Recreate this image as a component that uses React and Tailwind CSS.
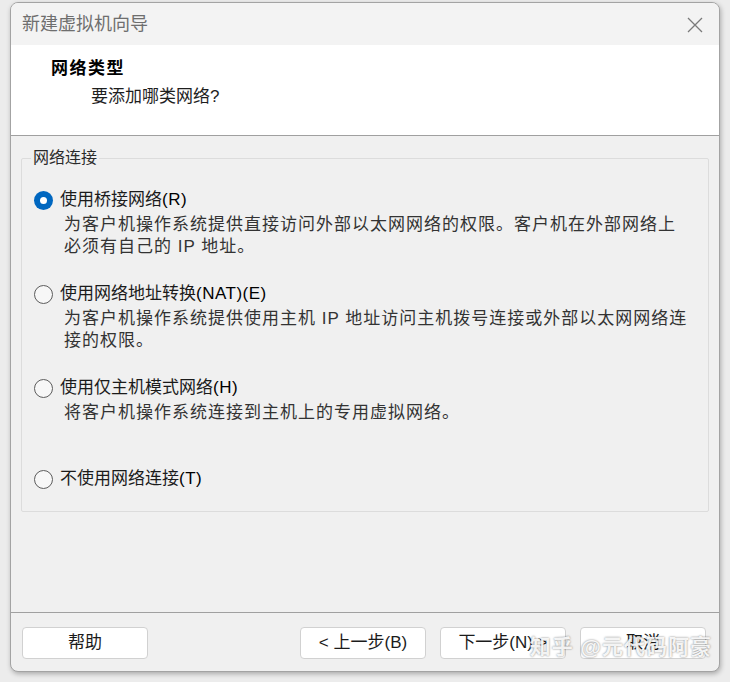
import React, { useState } from 'react';

const font = "font-['Liberation_Sans','Noto_Sans_CJK_SC',sans-serif]";

const options = [
  {
    id: 'bridged',
    label: '使用桥接网络',
    key: '(R)',
    desc: ['为客户机操作系统提供直接访问外部以太网网络的权限。客户机在外部网络上', '必须有自己的 IP 地址。'],
  },
  {
    id: 'nat',
    label: '使用网络地址转换',
    key: '(NAT)(E)',
    desc: ['为客户机操作系统提供使用主机 IP 地址访问主机拨号连接或外部以太网网络连', '接的权限。'],
  },
  {
    id: 'host',
    label: '使用仅主机模式网络',
    key: '(H)',
    desc: ['将客户机操作系统连接到主机上的专用虚拟网络。'],
  },
  {
    id: 'none',
    label: '不使用网络连接',
    key: '(T)',
    desc: [],
  },
];

const Radio = ({ checked }) =>
  checked ? (
    <span className="flex h-[19px] w-[19px] shrink-0 items-center justify-center rounded-full bg-[#0067c0]">
      <span className="h-[7px] w-[7px] rounded-full bg-white" />
    </span>
  ) : (
    <span className="h-[19px] w-[19px] shrink-0 rounded-full border border-[#5c5c5c] bg-[#f7f7f7]" />
  );

const Button = ({ children, className = '' }) => (
  <button
    className={`h-[32px] w-[126px] rounded-[4px] border border-[#d1d1d1] bg-white text-[17px] text-[#1b1b1b] ${className}`}
  >
    {children}
  </button>
);

const App = () => {
  const [selected, setSelected] = useState('bridged');

  return (
    <div className={`h-[682px] w-[730px] overflow-hidden bg-[#ececec] pl-[10px] pt-[2px] ${font}`}>
      <div className="relative flex h-[670px] w-[710px] flex-col overflow-hidden rounded-[8px] border border-[#a3a3a3] bg-[#f0f0f0] shadow-[1px_2px_5px_rgba(0,0,0,0.28)]">
        {/* Title bar */}
        <div className="flex h-[42px] shrink-0 items-center justify-between bg-[#f3f3f3] pl-[11px] pr-[16px]">
          <span className="text-[18px] text-[#6e6e6e]">新建虚拟机向导</span>
          <svg width="16" height="16" viewBox="0 0 16 16" className="mt-[1px]">
            <path d="M1 1 L15 15 M15 1 L1 15" stroke="#7a7a7a" strokeWidth="1.3" fill="none" />
          </svg>
        </div>

        {/* Header */}
        <div className="h-[91px] shrink-0 border-b border-[#a0a0a0] bg-white pl-[40px] pt-[12px]">
          <div className="text-[17px] font-bold leading-[24px] tracking-[1.5px] text-black">网络类型</div>
          <div className="mt-[4px] pl-[40px] text-[17px] leading-[24px] text-[#1e1e1e]">要添加哪类网络?</div>
        </div>

        {/* Body */}
        <div className="flex-1 px-[10px] pt-[11px]">
          <fieldset className="min-w-0 rounded-[2px] border border-[#dcdcdc] px-[12px] pb-[21px]">
            <legend className="ml-[-3px] px-[2px] text-[16px] leading-[22px] text-[#2a2a2a]">网络连接</legend>
            <div className="flex flex-col gap-[25px] pt-[20px]">
              {options.map((o, i) => (
                <div key={o.id} className={i === 3 ? 'mt-[19px]' : ''}>
                  <label
                    className="flex cursor-default items-center gap-[7px]"
                    onClick={() => setSelected(o.id)}
                  >
                    <Radio checked={selected === o.id} />
                    <span className="text-[17px] leading-[22px] text-[#1b1b1b]">
                      {o.label}
                      <span className="tracking-[0.5px] text-black">{o.key}</span>
                    </span>
                  </label>
                  {o.desc.length > 0 && (
                    <div className="pl-[30px] pt-[3px] text-[17px] leading-[22px] tracking-[1px] text-[#333]">
                      {o.desc.map((line) => (
                        <div key={line} className="whitespace-nowrap">{line}</div>
                      ))}
                    </div>
                  )}
                </div>
              ))}
            </div>
          </fieldset>
        </div>

        {/* Footer */}
        <div className="flex h-[59px] shrink-0 items-start border-t border-[#a0a0a0] pl-[11px] pr-[13px] pt-[14px]">
          <Button>帮助</Button>
          <div className="ml-auto flex gap-[14px]">
            <Button>&lt; 上一步(B)</Button>
            <Button>下一步(N) &gt;</Button>
            <Button>取消</Button>
          </div>
        </div>

        {/* watermark */}
        <div className="absolute bottom-[9px] right-[7px] text-[21px] font-bold tracking-[1px] text-white/90 [text-shadow:0_0_2px_rgba(0,0,0,0.55)]">
          知乎 @元代码阿豪
        </div>
      </div>
    </div>
  );
};

export default App;
